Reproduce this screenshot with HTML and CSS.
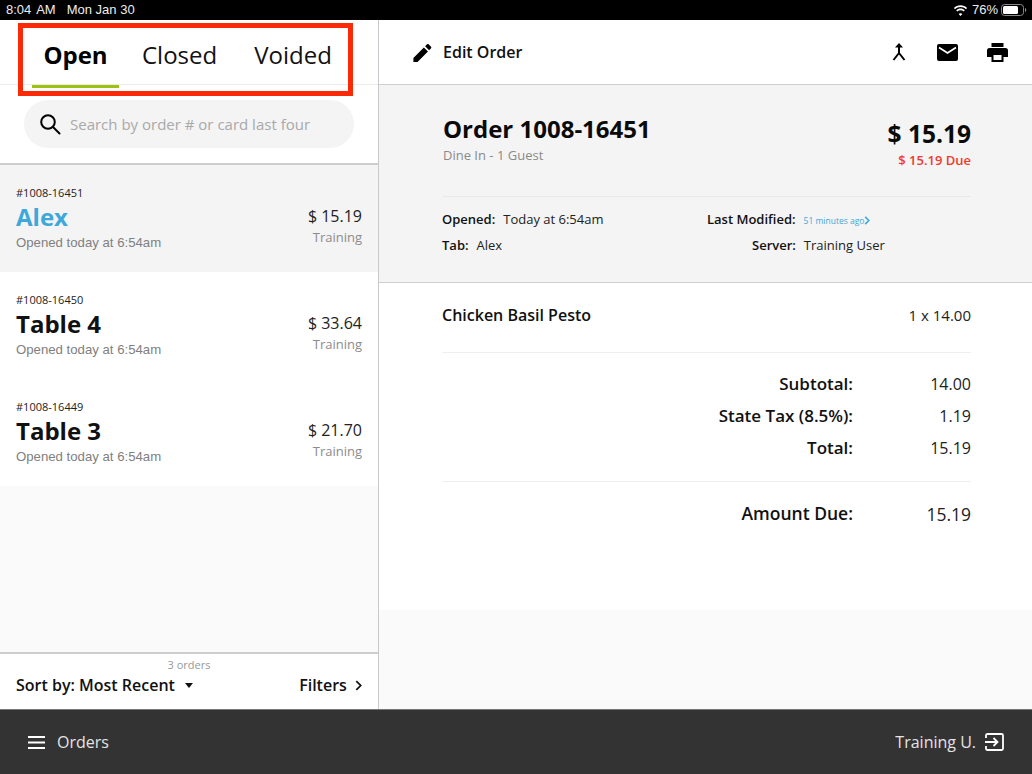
FILE: index.html
```html
<!DOCTYPE html>
<html lang="en">
<head>
<meta charset="utf-8">
<title>Orders</title>
<link rel="stylesheet" href="styles.css">
</head>
<body>
<div class="app">
  <header class="status">
    <div class="status-left"><span class="clock">8:04 AM</span><span>Mon Jan 30</span></div>
    <div class="status-right">
      <svg class="wifi" viewBox="0 0 16 12" width="15" height="11"><path fill="#fff" d="M8 2.2c2.3 0 4.4.9 6 2.4l1.2-1.3C13.3 1.4 10.8.3 8 .3S2.700 1.400.8 3.300L2 4.600c1.600-1.500 3.700-2.400 6-2.400zm0 3.500c1.300 0 2.500.5 3.500 1.400l1.200-1.300C11.400 4.600 9.800 3.900 8 3.900s-3.400.7-4.700 1.900l1.200 1.300c1-.9 2.200-1.400 3.500-1.400zm0 3.400c-.8 0-1.500.3-2 .8l2 2.100 2-2.100c-.5-.5-1.200-.8-2-.8z"/></svg>
      <span>76%</span>
      <svg class="battery" viewBox="0 0 26 12" width="26" height="12"><rect x=".5" y=".5" width="22" height="11" rx="3" fill="none" stroke="#888"/><rect x="2" y="2" width="15" height="8" rx="1.500" fill="#fff"/><path d="M24 4v4c.8-.3 1.300-1 1.300-2s-.5-1.700-1.300-2z" fill="#888"/></svg>
    </div>
  </header>

  <div class="main">
    <aside class="left">
      <nav class="tabs">
        <div class="tab active">Open</div>
        <div class="tab tab-closed">Closed</div>
        <div class="tab tab-voided">Voided</div>
      </nav>
      <div class="annotation"></div>
      <div class="search-wrap">
        <div class="search">
          <svg viewBox="0 0 22 22" width="22" height="22"><circle cx="9" cy="9" r="6.800" fill="none" stroke="#000" stroke-width="2"/><path d="M14 14l6.500 6.500" stroke="#000" stroke-width="2" stroke-linecap="round"/></svg>
          <span>Search by order # or card last four</span>
        </div>
      </div>
      <div class="orders">
        <div class="order selected">
          <div class="order-main">
            <div class="num">#1008-16451</div>
            <div class="name">Alex</div>
            <div class="opened">Opened today at 6:54am</div>
          </div>
          <div class="order-side"><div class="price">$ 15.19</div><div class="server">Training</div></div>
        </div>
        <div class="order">
          <div class="order-main">
            <div class="num">#1008-16450</div>
            <div class="name">Table 4</div>
            <div class="opened">Opened today at 6:54am</div>
          </div>
          <div class="order-side"><div class="price">$ 33.64</div><div class="server">Training</div></div>
        </div>
        <div class="order">
          <div class="order-main">
            <div class="num">#1008-16449</div>
            <div class="name">Table 3</div>
            <div class="opened">Opened today at 6:54am</div>
          </div>
          <div class="order-side"><div class="price">$ 21.70</div><div class="server">Training</div></div>
        </div>
      </div>
      <div class="list-foot">
        <div class="count">3 orders</div>
        <div class="foot-row">
          <div class="sort">Sort by: Most Recent <svg viewBox="0 0 8 5" width="8" height="5"><path d="M0 0h8L4 5z" fill="#111"/></svg></div>
          <div class="filters">Filters <svg viewBox="0 0 8 12" width="7" height="11"><path d="M1.500 1l5 5-5 5" fill="none" stroke="#111" stroke-width="2"/></svg></div>
        </div>
      </div>
    </aside>

    <section class="right">
      <div class="toolbar">
        <div class="edit">
          <svg viewBox="0 0 20 22" width="19" height="20"><path fill="#000" d="M0 17.500V22h4.500L16 10.500 11.500 6zM19.400 7c.5-.5.5-1.200 0-1.700l-2.700-2.700c-.5-.5-1.200-.5-1.700 0l-2.100 2.100 4.400 4.400z"/></svg>
          <span>Edit Order</span>
        </div>
        <div class="tools">
          <svg class="merge" viewBox="0 0 14 18" width="14" height="18"><path fill="none" stroke="#000" stroke-width="2" d="M7 3v7L1.500 17M7 10l5.500 7"/><path d="M7 0l4 4.500H3z" fill="#000"/></svg>
          <svg viewBox="0 0 21 17" width="21" height="17"><rect width="21" height="17" rx="2" fill="#000"/><path d="M2 3.500l8.500 5.500L19 3.500" fill="none" stroke="#fff" stroke-width="1.700"/></svg>
          <svg viewBox="0 0 21 19" width="21" height="19"><path fill="#000" d="M4.500 0h12v4h-12zM2.500 5h16A2.500 2.500 0 0 1 21 7.500V14h-4.500v5h-12v-5H0V7.500A2.500 2.500 0 0 1 2.500 5z"/><rect x="6.500" y="12" width="8" height="5" fill="#fff"/></svg>
        </div>
      </div>
      <div class="summary">
        <div class="summary-top">
          <div>
            <h1>Order 1008-16451</h1>
            <div class="guest">Dine In - 1 Guest</div>
          </div>
          <div class="totals">
            <div class="big">$ 15.19</div>
            <div class="due">$ 15.19 Due</div>
          </div>
        </div>
        <div class="meta">
          <div class="meta-row">
            <div class="meta-a"><b>Opened:</b><span>Today at 6:54am</span></div>
            <div class="meta-b"><b>Last Modified:</b><span class="ago">51 minutes ago<svg viewBox="0 0 6 10" width="6" height="9"><path d="M1 1l4 4-4 4" fill="none" stroke="#3fa9dc" stroke-width="1.800"/></svg></span></div>
          </div>
          <div class="meta-row row-two">
            <div class="meta-a"><b>Tab:</b><span>Alex</span></div>
            <div class="meta-b"><b>Server:</b><span>Training User</span></div>
          </div>
        </div>
      </div>
      <div class="detail">
        <div class="item"><b>Chicken Basil Pesto</b><span>1 x 14.00</span></div>
        <div class="sums">
          <div class="sum"><b>Subtotal:</b><span>14.00</span></div>
          <div class="sum"><b>State Tax (8.5%):</b><span>1.19</span></div>
          <div class="sum"><b>Total:</b><span>15.19</span></div>
        </div>
        <div class="sum amount"><b>Amount Due:</b><span>15.19</span></div>
      </div>
      <div class="right-fill"></div>
    </section>
  </div>

  <footer class="bottom">
    <div class="bottom-left">
      <svg viewBox="0 0 17 13" width="17" height="13"><path d="M0 1h17M0 6.500h17M0 12h17" stroke="#fff" stroke-width="2"/></svg>
      <span>Orders</span>
    </div>
    <div class="bottom-right">
      <span>Training U.</span>
      <svg viewBox="0 0 19 18" width="19" height="18"><path d="M1 5V2.500A1.500 1.500 0 0 1 2.500 1h14A1.500 1.500 0 0 1 18 2.500v13a1.500 1.500 0 0 1-1.500 1.500h-14A1.500 1.500 0 0 1 1 15.500V13" fill="none" stroke="#fff" stroke-width="1.800"/><path d="M0 9h12M8.500 5l4 4-4 4" fill="none" stroke="#fff" stroke-width="1.800"/></svg>
    </div>
  </footer>
</div>
</body>
</html>
```

FILE: styles.css
```css
* { box-sizing: border-box; }
html, body { margin: 0; padding: 0; }
body { font-family: "Open Sans", "Liberation Sans", sans-serif; color: #111; }
.app { width: 1032px; height: 774px; display: flex; flex-direction: column; overflow: hidden; position: relative; }

.status { height: 20px; background: #000; color: #eee; display: flex; justify-content: space-between; align-items: center; padding: 0 5px 0 6px; font: 13px/20px "Liberation Sans", Arial, sans-serif; flex: none; }
.status-left { display: flex; gap: 11px; }
.clock { word-spacing: 2px; }
.status-right { display: flex; align-items: center; gap: 4px; }
.status-right .battery { margin-left: -1px; }

.main { flex: 1; display: flex; min-height: 0; }

.left { width: 379px; flex: none; border-right: 1px solid #c9c9c9; display: flex; flex-direction: column; background: #fff; position: relative; }
.tabs { height: 65px; border-bottom: 1px solid #ececec; display: flex; padding-left: 32px; flex: none; }
.tab { font-size: 24px; line-height: 34px; padding-top: 18px; color: #111; }
.tab.active { font-weight: 700; color: #000; width: 87px; text-align: center; border-bottom: 3px solid #9cc10e; height: 68px; margin-bottom: -4px; }
.tab-closed { margin-left: 23px; }
.tab-voided { margin-left: 37px; }
.annotation { position: absolute; left: 18px; top: 3px; width: 335px; height: 73px; border: 5px solid #fa2a08; pointer-events: none; }

.search-wrap { height: 80px; padding: 15px 24px 0; border-bottom: 2px solid #cdcdcd; flex: none; }
.search { height: 48px; width: 330px; border-radius: 24px; background: #f4f4f4; display: flex; align-items: center; padding-left: 15px; gap: 9px; font-size: 15px; color: #a9a9a9; }

.orders { flex: 1; background: #fafafa; }
.order { height: 107px; background: #fff; display: flex; justify-content: space-between; padding: 19px 16px 0; }
.order.selected { background: #f4f4f4; }
.num { font-size: 11px; line-height: 17px; color: #222; }
.name { font-size: 24px; font-weight: 700; line-height: 31px; color: #111; }
.selected .name { color: #3ea8da; }
.opened { font: 13.200px/20px "Liberation Sans", Arial, sans-serif; color: #808080; margin-top: 1px; }
.order-side { text-align: right; padding-top: 21px; }
.price { font-size: 16px; line-height: 22px; color: #222; }
.server { font-size: 13px; line-height: 20px; color: #8c8c8c; }

.list-foot { height: 57px; border-top: 2px solid #cdcdcd; flex: none; background: #fff; padding: 3px 16px 0; }
.count { text-align: center; font-size: 11px; line-height: 16px; color: #999; }
.foot-row { display: flex; justify-content: space-between; align-items: center; font-size: 16px; font-weight: 600; line-height: 24px; color: #111; }
.sort svg { margin-left: 6px; vertical-align: 3px; }
.filters svg { margin-left: 4px; vertical-align: 0; }

.right { flex: 1; display: flex; flex-direction: column; min-width: 0; }
.toolbar { height: 65px; flex: none; display: flex; justify-content: space-between; align-items: center; padding: 0 24px 0 34px; border-bottom: 1px solid #cfcfcf; }
.edit { display: flex; align-items: center; gap: 11px; font-size: 16px; font-weight: 600; color: #111; }
.tools { display: flex; align-items: center; gap: 29px; }
.tools .merge { margin-right: 2px; }

.summary { height: 198px; flex: none; background: #f4f4f4; border-bottom: 1px solid #cfcfcf; padding: 0 61px 0 63px; }
.summary-top { display: flex; justify-content: space-between; height: 112px; border-bottom: 1px solid #e8e8e8; margin: 0 0 0 1px; padding-top: 26px; }
h1 { margin: 0; font-size: 24px; font-weight: 700; line-height: 36px; color: #0a0a0a; }
.guest { font-size: 13px; line-height: 16px; color: #8a8a8a; }
.totals { text-align: right; padding-top: 5px; }
.big { font-size: 24.500px; font-weight: 700; line-height: 36px; color: #0a0a0a; }
.due { font-size: 13px; font-weight: 600; line-height: 16px; color: #f03a2e; }
.meta { font-size: 13px; line-height: 20px; color: #222; padding-top: 12px; }
.meta-row { display: flex; height: 20px; }
.row-two { margin-top: 6px; }
.meta b { font-weight: 600; color: #111; }
.meta span { margin-left: 8px; }
.meta-a { width: 265px; flex: none; }
.row-two .meta-b { padding-left: 45px; }
.meta .ago { font-size: 8.500px; color: #3ea8da; }
.ago svg { vertical-align: -1px; }

.detail { height: 327px; flex: none; background: #fff; padding: 0 61px 0 63px; }
.item { height: 70px; display: flex; justify-content: space-between; padding-top: 20px; line-height: 24px; border-bottom: 1px solid #efefef; font-size: 15px; color: #222; }
.item b { font-size: 16px; font-weight: 600; color: #111; }
.sums { padding-top: 15px; height: 129px; border-bottom: 1px solid #efefef; }
.sum { display: flex; justify-content: flex-end; height: 32px; line-height: 32px; font-size: 16px; color: #222; }
.sum b { font-size: 17px; font-weight: 600; color: #111; }
.sum span { width: 118px; text-align: right; }
.amount { margin-top: 15px; }
.amount b { font-size: 17.500px; }
.amount span { font-size: 17.500px; padding-top: 1px; }
.right-fill { flex: 1; background: #fafafa; }

.bottom { height: 65px; flex: none; background: #333; border-top: 1px solid #777; display: flex; justify-content: space-between; align-items: center; padding: 0 28px; color: #e4e4e4; font-size: 16px; }
.bottom-left { display: flex; align-items: center; gap: 12px; }
.bottom-right { display: flex; align-items: center; gap: 9px; }
```
